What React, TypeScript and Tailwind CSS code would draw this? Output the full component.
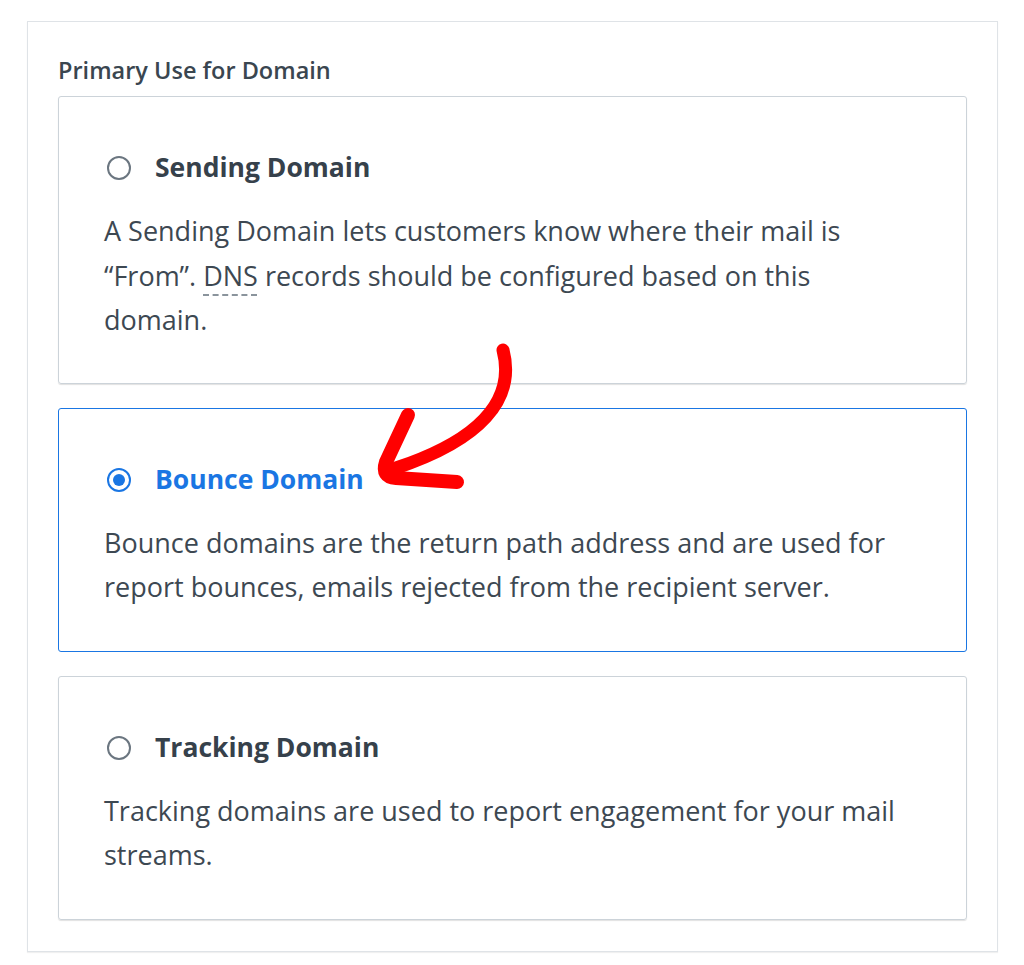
import React from "react";

const Radio = ({ checked }: { checked?: boolean }) =>
  checked ? (
    <span className="flex h-[24px] w-[24px] shrink-0 items-center justify-center rounded-full border-[2px] border-[#1a76e3]">
      <span className="h-[12px] w-[12px] rounded-full bg-[#1a76e3]" />
    </span>
  ) : (
    <span className="h-[24px] w-[24px] shrink-0 rounded-full border-[2px] border-[#6b7680]" />
  );

export default function App() {
  return (
    <div
      className="relative h-[965px] w-[1024px] bg-white pt-[21px] pl-[27px]"
      style={{ fontFamily: "'Open Sans', 'Noto Sans', sans-serif" }}
    >
      <div className="w-[971px] h-[931px] border border-[#dfe3e7] shadow-[0_1px_1px_rgba(0,0,0,0.06)] pt-[33px] pl-[30px] pr-[30px]">
        <div className="text-[23.5px] leading-[30px] font-semibold text-[#3a4650] mb-[11px]">
          Primary Use for Domain
        </div>
        <div className="flex flex-col gap-[24px]">
          <div className="h-[288px] rounded-[3px] border border-[#ccd3d9] shadow-[0_1px_1px_rgba(0,0,0,0.12)] pt-[55px] pl-[45px] pr-[55px]">
            <div className="flex items-center gap-[24px] h-[32px] pl-[3px]">
              <Radio />
              <span className="text-[26.5px] font-bold text-[#36414b]">Sending Domain</span>
            </div>
            <p className="mt-[25px] text-[27px] leading-[44.5px] text-[#3d4852]">
              A Sending Domain lets customers know where their mail is “From”.{" "}
              <span className="underline decoration-dashed decoration-[#8a949c] decoration-[2px] underline-offset-[9px]">
                DNS
              </span>{" "}
              records should be configured based on this domain.
            </p>
          </div>
          <div className="h-[244px] rounded-[3px] border border-[#1a76e3] pt-[55px] pl-[45px] pr-[55px]">
            <div className="flex items-center gap-[24px] h-[32px] pl-[3px]">
              <Radio checked />
              <span className="text-[26.5px] font-bold text-[#1a76e3]">Bounce Domain</span>
            </div>
            <p className="mt-[25px] text-[27px] leading-[44px] text-[#3d4852]">
              Bounce domains are the return path address and are used for report bounces, emails
              rejected from the recipient server.
            </p>
          </div>
          <div className="h-[244px] rounded-[3px] border border-[#ccd3d9] shadow-[0_1px_1px_rgba(0,0,0,0.12)] pt-[55px] pl-[45px] pr-[55px]">
            <div className="flex items-center gap-[24px] h-[32px] pl-[3px]">
              <Radio />
              <span className="text-[26.5px] font-bold text-[#36414b]">Tracking Domain</span>
            </div>
            <p className="mt-[25px] text-[27px] leading-[44px] text-[#3d4852]">
              Tracking domains are used to report engagement for your mail streams.
            </p>
          </div>
        </div>
      </div>
      <svg
        className="absolute left-0 top-0 pointer-events-none"
        width="1024"
        height="965"
        viewBox="0 0 1024 965"
      >
        <path
          d="M503 350 C 516 400 480 440 396 468"
          fill="none"
          stroke="#ff0000"
          strokeWidth="13"
          strokeLinecap="round"
        />
        <path
          d="M408 415 L 386 462 Q 381 477 396 478 L 457 482"
          fill="none"
          stroke="#ff0000"
          strokeWidth="14"
          strokeLinecap="round"
          strokeLinejoin="round"
        />
      </svg>
    </div>
  );
}
